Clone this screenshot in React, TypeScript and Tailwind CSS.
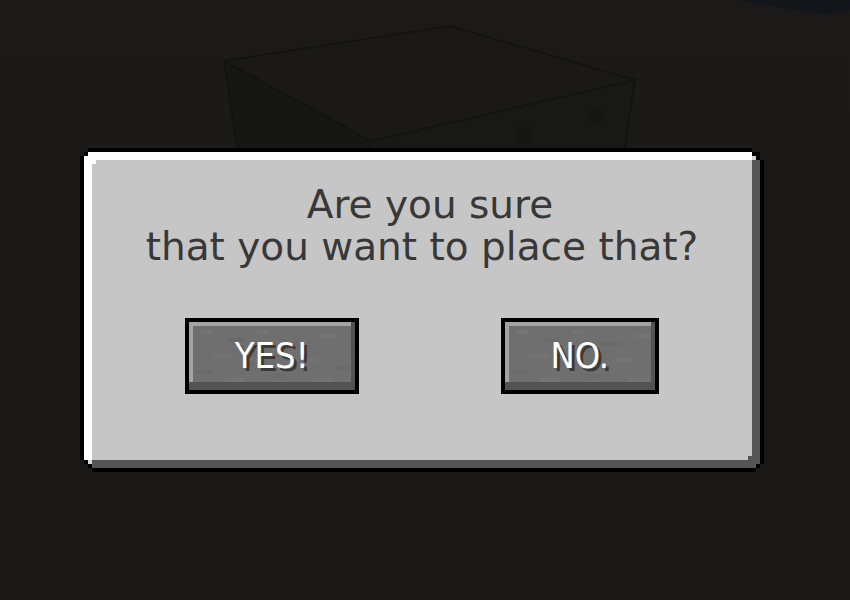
import type { ReactNode } from 'react';

// light and dark flecks of the stone texture, in 4px cells: x, y, width, shade
const flecks: [number, number, number, string][] = [
  [3, 2, 3, '#7a7a7a'], [10, 4, 4, '#676767'], [17, 2, 3, '#787878'], [24, 5, 5, '#696969'],
  [33, 3, 4, '#7a7a7a'], [40, 6, 2, '#666666'], [6, 8, 5, '#777777'], [13, 10, 3, '#686868'],
  [28, 9, 4, '#787878'], [36, 11, 4, '#686868'], [2, 12, 4, '#676767'], [9, 14, 5, '#787878'],
  [20, 13, 4, '#696969'], [31, 14, 5, '#777777'], [39, 15, 3, '#797979'], [5, 17, 3, '#505050'],
  [18, 17, 4, '#626262'], [27, 17, 3, '#505050'], [36, 17, 3, '#616161'], [22, 7, 2, '#777777'],
];

const Scene = () => (
  <svg
    className="absolute inset-0 h-full w-full"
    viewBox="0 0 850 600"
    preserveAspectRatio="xMidYMin slice"
    aria-hidden="true"
  >
    <defs>
      <linearGradient id="ground" x1="0" y1="0" x2="0" y2="1">
        <stop offset="0" stopColor="#1b1a18" />
        <stop offset="1" stopColor="#191817" />
      </linearGradient>
    </defs>
    <rect width="850" height="600" fill="url(#ground)" />
    <path d="M738 0 L790 9 L826 15 L850 10 V0 Z" fill="#12151a" />
    <path d="M224 61 L450 26 L635 80 L371 141 Z" fill="#1a1917" />
    <path d="M224 61 L371 141 V260 H254 Z" fill="#161614" />
    <path d="M371 141 L635 80 L608 260 H371 Z" fill="#181816" />
    <g fill="#161614">
      <path d="M516 128 L532 124 V144 L516 148 Z" />
      <path d="M590 112 L604 106 L602 122 L589 126 Z" />
    </g>
    <g fill="none" stroke="#121210" strokeWidth="1.5">
      <path d="M224 61 L450 26 L635 80 L371 141 Z" />
      <path d="M224 61 L254 260 M371 141 V260 M635 80 L608 260" />
    </g>
  </svg>
);

const StoneButton = ({ children }: { children: ReactNode }) => (
  <button
    type="button"
    className="relative h-[76px] cursor-pointer border-4 border-black bg-[#6f6f6f] px-[46px] font-['DejaVu_Sans_Condensed','DejaVu_Sans',sans-serif] text-4xl text-white"
  >
    <svg className="absolute inset-0 h-full w-full" aria-hidden="true">
      {flecks.map(([x, y, w, fill], index) => (
        <rect key={index} x={x * 4} y={y * 4} width={w * 4} height="4" fill={fill} opacity="0.6" />
      ))}
    </svg>
    <span className="absolute inset-x-0 bottom-0 h-2 bg-[#505050]/90"></span>
    <span className="absolute inset-y-0 right-0 w-1 bg-[#505050]/90"></span>
    <span className="absolute top-0 right-1 left-0 h-1 bg-[#a3a3a3]"></span>
    <span className="absolute top-0 bottom-2 left-0 w-1 bg-[#a3a3a3]"></span>
    <span className="relative [text-shadow:3px_3px_0_#3a3a3a]">{children}</span>
  </button>
);

const Dialog = () => (
  <div
    role="dialog"
    aria-labelledby="question"
    className="w-full bg-black p-1 [clip-path:polygon(8px_0,calc(100%-12px)_0,calc(100%-12px)_4px,calc(100%-8px)_4px,calc(100%-4px)_4px,calc(100%-4px)_12px,100%_12px,100%_calc(100%-8px),calc(100%-4px)_calc(100%-8px),calc(100%-4px)_calc(100%-4px),calc(100%-8px)_calc(100%-4px),calc(100%-8px)_100%,12px_100%,12px_calc(100%-4px),8px_calc(100%-4px),8px_calc(100%-8px),4px_calc(100%-8px),4px_calc(100%-12px),0_calc(100%-12px),0_8px,4px_8px,4px_4px,8px_4px)]"
  >
    <div className="relative border-8 border-t-white border-r-[#555555] border-b-[#555555] border-l-white bg-[#c6c6c6] px-6 pt-6 pb-[66px] [clip-path:polygon(4px_0,calc(100%-8px)_0,calc(100%-8px)_4px,calc(100%-4px)_4px,calc(100%-4px)_8px,100%_8px,100%_calc(100%-4px),calc(100%-4px)_calc(100%-4px),calc(100%-4px)_100%,8px_100%,8px_calc(100%-4px),4px_calc(100%-4px),4px_calc(100%-8px),0_calc(100%-8px),0_4px,4px_4px)]">
      <span className="absolute top-0 left-0 h-1 w-1 bg-white"></span>
      <span className="absolute right-0 bottom-0 h-1 w-1 bg-[#555555]"></span>
      <span className="absolute -top-1 -right-1 h-1 w-1 bg-[#d6d6d6]"></span>
      <span className="absolute -bottom-1 -left-1 h-1 w-1 bg-[#d6d6d6]"></span>
      <h1
        id="question"
        className="text-center font-['DejaVu_Sans',sans-serif] text-[39px] leading-[42px] text-[#383838]"
      >
        <span className="block pl-4">Are you sure</span>
        <span className="block">that you want to place that?</span>
      </h1>
      <div className="mt-[50px] flex flex-wrap justify-center gap-x-[142px] gap-y-4">
        <StoneButton>YES!</StoneButton>
        <StoneButton>NO.</StoneButton>
      </div>
    </div>
  </div>
);

const App = () => {
  return (
    <main className="relative flex min-h-screen items-center overflow-hidden bg-[#1a1917] pt-5 pr-[86px] pl-20">
      <Scene />
      <Dialog />
    </main>
  );
};

export default App;
